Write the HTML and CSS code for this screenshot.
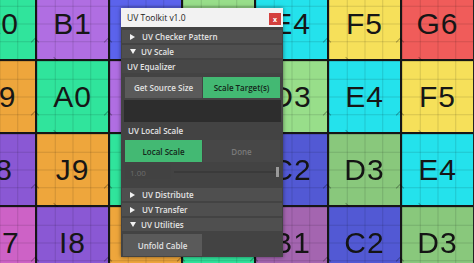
FILE: index.html
```html
<!DOCTYPE html>
<html lang="en">
<head>
    <meta charset="UTF-8" />
    <title>UV Toolkit v1.0</title>
    <link rel="stylesheet" href="styles.css">
</head>
<body>
    <div class="viewport">
        <!-- UV checker pattern in the viewport (tiles under the window have no visible label) -->
        <div class="checker">
            <div class="cell a0"><span>A0</span></div>
            <div class="cell b1"><span>B1</span></div>
            <div class="cell c2 under"></div>
            <div class="cell d3 under"></div>
            <div class="cell e4"><span>E4</span></div>
            <div class="cell f5"><span>F5</span></div>
            <div class="cell g6"><span>G6</span></div>

            <div class="cell j9"><span>J9</span></div>
            <div class="cell a0"><span>A0</span></div>
            <div class="cell b1 under"></div>
            <div class="cell c2 under"></div>
            <div class="cell d3"><span>D3</span></div>
            <div class="cell e4"><span>E4</span></div>
            <div class="cell f5"><span>F5</span></div>

            <div class="cell i8"><span>I8</span></div>
            <div class="cell j9"><span>J9</span></div>
            <div class="cell a0 under"></div>
            <div class="cell b1 under"></div>
            <div class="cell c2 dim"><span>C2</span></div>
            <div class="cell d3 dim"><span>D3</span></div>
            <div class="cell e4"><span>E4</span></div>

            <div class="cell h7"><span>H7</span></div>
            <div class="cell i8"><span>I8</span></div>
            <div class="cell j9 under"></div>
            <div class="cell a0 under"></div>
            <div class="cell b1 dim"><span>B1</span></div>
            <div class="cell c2 dim"><span>C2</span></div>
            <div class="cell d3 dim"><span>D3</span></div>
        </div>

        <!-- Floating tool window -->
        <div class="window">
            <div class="titlebar">
                <span>UV Toolkit v1.0</span>
                <span class="close">x</span>
            </div>
            <div class="content">
                <div class="frame-head"><i class="tri right"></i>UV Checker Pattern</div>
                <div class="frame-head"><i class="tri down"></i>UV Scale</div>
                <div class="label-row">UV Equalizer</div>
                <div class="btn-row first">
                    <div class="btn">Get Source Size</div>
                    <div class="btn green">Scale Target(s)</div>
                </div>
                <div class="field"></div>
                <div class="label-row plain">UV Local Scale</div>
                <div class="btn-row second">
                    <div class="btn green">Local Scale</div>
                    <div class="btn off">Done</div>
                </div>
                <div class="slider-row">
                    <div class="num">1.00</div>
                    <div class="track"><span class="handle"></span></div>
                </div>
                <div class="frame-head lower"><i class="tri right"></i>UV Distribute</div>
                <div class="frame-head"><i class="tri right"></i>UV Transfer</div>
                <div class="frame-head"><i class="tri down"></i>UV Utilities</div>
                <div class="btn unfold">Unfold Cable</div>
            </div>
        </div>
    </div>
</body>
</html>
```

FILE: styles.css
```css
/* Page = a 3D viewport showing the checker texture */
body {
    margin: 0;
    padding: 0;
    background: #222;
    overflow: hidden;
}

.viewport {
    position: relative;
    width: 474px;
    height: 263px;
    overflow: hidden;
}

/* Checker grid */
.checker {
    display: grid;
    grid-template-columns: repeat(7, 71px);
    grid-template-rows: repeat(4, 71px);
    gap: 2px;
    background: #161616;
    margin-left: -36px;
    margin-top: -12px;
    width: max-content;
}

.cell {
    position: relative;
    display: flex;
    align-items: center;
    justify-content: center;
    background-image:
        linear-gradient(to right, rgba(0, 0, 0, 0.13) 1px, transparent 1px),
        linear-gradient(to bottom, rgba(0, 0, 0, 0.13) 1px, transparent 1px);
    background-size: 17.75px 17.75px;
}

.cell span {
    font-family: "Liberation Sans", Arial, sans-serif;
    font-size: 30px;
    letter-spacing: 1px;
    color: #161616;
}

/* little direction marks on each tile */
.cell::before {
    content: "";
    position: absolute;
    left: -5px;
    bottom: 14px;
    width: 5px;
    height: 5px;
    border-left: 1px solid rgba(0, 0, 0, 0.3);
    border-top: 1px solid rgba(0, 0, 0, 0.3);
    transform: rotate(45deg);
}

.cell::after {
    content: "";
    position: absolute;
    left: 14px;
    bottom: -5px;
    width: 5px;
    height: 5px;
    border-right: 1px solid rgba(0, 0, 0, 0.3);
    border-top: 1px solid rgba(0, 0, 0, 0.3);
    transform: rotate(45deg);
}

.a0 { background-color: #30e49c; }
.b1 { background-color: #b06ee2; }
.c2 { background-color: #5b63ec; }
.d3 { background-color: #98de8a; }
.e4 { background-color: #24e2ec; }
.f5 { background-color: #f6e05a; }
.g6 { background-color: #f05c5a; }
.h7 { background-color: #cd62c6; }
.i8 { background-color: #8a58d4; }
.j9 { background-color: #eea63c; }

.dim { filter: brightness(0.9); }
.b1.dim { background-color: #b670c4; }

/* Tool window */
.window {
    position: absolute;
    left: 121px;
    top: 8px;
    width: 162px;
    height: 249px;
    background: #434343;
    box-shadow: 0 0 4px rgba(0, 0, 0, 0.5);
    font-family: "Open Sans", "DejaVu Sans", sans-serif;
    font-size: 8px;
    font-weight: 600;
    color: #e4e4e4;
    display: flex;
    flex-direction: column;
}

.titlebar {
    height: 19px;
    background: #f2f2f2;
    color: #1a1a1a;
    font-size: 8.5px;
    font-weight: 400;
    display: flex;
    align-items: center;
    justify-content: space-between;
    padding: 0 2px 0 6px;
}

.close {
    width: 12px;
    height: 12px;
    margin-top: 3px;
    background: #d4403e;
    color: #fff;
    font-size: 7px;
    font-weight: 700;
    display: flex;
    align-items: center;
    justify-content: center;
}

.content {
    display: flex;
    flex-direction: column;
    gap: 2px;
    padding-top: 3px;
}

.frame-head {
    height: 13px;
    margin: 0 1px;
    background: #4f4f4f;
    display: flex;
    align-items: center;
    padding-left: 8px;
}

.frame-head.lower { margin-top: 6px; }

.tri {
    width: 0;
    height: 0;
    margin-right: 7px;
}

.tri.right {
    border-top: 3.5px solid transparent;
    border-bottom: 3.5px solid transparent;
    border-left: 5px solid #f2f2f2;
}

.tri.down {
    border-left: 3.5px solid transparent;
    border-right: 3.5px solid transparent;
    border-top: 5px solid #f2f2f2;
    margin-right: 5px;
}

.label-row {
    height: 13px;
    margin: 0 1px;
    background: #474747;
    display: flex;
    align-items: center;
    padding-left: 5px;
}

.label-row.plain {
    background: none;
    padding-left: 6px;
}

.btn-row {
    display: flex;
    gap: 1px;
    padding: 0 3px 0 4px;
}

.btn-row.first { margin-top: 2px; }
.btn-row.second { margin-top: 1px; }

.btn {
    flex: 1;
    height: 21px;
    background: #5a5a5a;
    display: flex;
    align-items: center;
    justify-content: center;
    color: #e2e2e2;
}

.btn-row.second .btn { height: 22px; }

.btn.green {
    background: #43b973;
    color: #14261a;
}

.btn.off {
    background: #474747;
    color: #7a7a7a;
}

.field {
    height: 22px;
    margin: 0 2px 0 3px;
    background: #2d2d2d;
}

.slider-row {
    height: 16px;
    display: flex;
    align-items: center;
    gap: 3px;
    padding: 0 3px 0 4px;
}

.num {
    width: 46px;
    height: 14px;
    background: #424242;
    color: #6c6c6c;
    font-weight: 400;
    display: flex;
    align-items: center;
    padding-left: 5px;
    box-sizing: border-box;
}

.track {
    flex: 1;
    height: 2px;
    background: #3a3a3a;
    display: flex;
    justify-content: flex-end;
    align-items: center;
}

.handle {
    width: 3px;
    height: 10px;
    background: #9a9a9a;
    margin-right: 1px;
}

.unfold {
    flex: none;
    width: 79px;
    height: 22px;
    margin: 1px 0 0 2px;
}
```
